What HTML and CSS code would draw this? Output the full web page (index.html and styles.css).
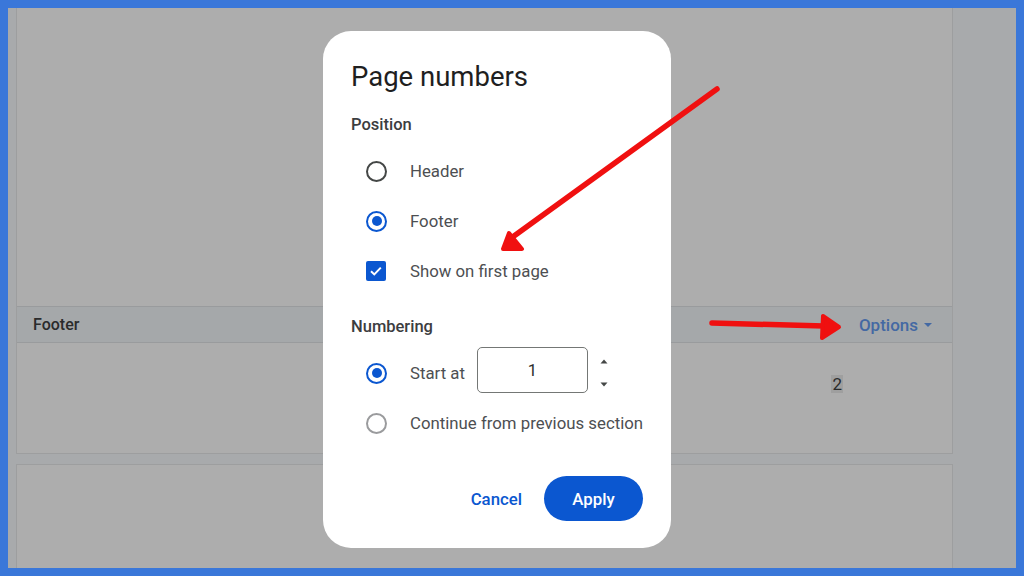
FILE: index.html
```html
<!DOCTYPE html>
<html lang="en">
<head>
  <meta charset="UTF-8">
  <title>Page numbers</title>
  <link rel="stylesheet" href="styles.css">
</head>
<body>

  <div class="frame">

    <!-- dimmed document behind the dialog -->
    <div class="doc">
      <div class="page page-first">
        <div class="page-body"></div>
        <div class="footer-bar">
          <span class="footer-title">Footer</span>
          <span class="options">Options <span class="caret"></span></span>
        </div>
        <div class="footer-area">
          <span class="page-num">2</span>
        </div>
      </div>
      <div class="page page-next"></div>
    </div>

    <!-- dialog -->
    <div class="dialog">
      <h1 class="dialog-title">Page numbers</h1>

      <div class="section-label">Position</div>
      <div class="option">
        <span class="radio"></span>
        <span class="option-label">Header</span>
      </div>
      <div class="option">
        <span class="radio checked"></span>
        <span class="option-label">Footer</span>
      </div>
      <div class="option">
        <span class="checkbox">
          <svg width="20" height="20" viewBox="0 0 20 20"><path d="M5 10.2l3.3 3.2 6.5-6.8" fill="none" stroke="#fff" stroke-width="2"/></svg>
        </span>
        <span class="option-label">Show on first page</span>
      </div>

      <div class="section-label numbering">Numbering</div>
      <div class="option">
        <span class="radio checked"></span>
        <span class="option-label">Start at</span>
        <span class="number-box">1</span>
        <span class="spinner">
          <svg width="10" height="30" viewBox="0 0 10 30">
            <path d="M1.5 5.5h7L5 1.5z" fill="#444746"/>
            <path d="M1.5 24.5h7L5 28.5z" fill="#444746"/>
          </svg>
        </span>
      </div>
      <div class="option">
        <span class="radio disabled"></span>
        <span class="option-label">Continue from previous section</span>
      </div>

      <div class="actions">
        <button class="btn-text">Cancel</button>
        <button class="btn-filled">Apply</button>
      </div>
    </div>

    <!-- red annotation arrows -->
    <svg class="arrows" width="1024" height="576" viewBox="0 0 1024 576">
      <g stroke="#f01010" stroke-linecap="round" stroke-linejoin="round" fill="#f01010">
        <path d="M717 89L514 236" stroke-width="5.5" fill="none"/>
        <path d="M503 249L509 233L522 249z" stroke-width="4"/>
        <path d="M712 323L824 326" stroke-width="5.5" fill="none"/>
        <path d="M839 327L823 316L822 338z" stroke-width="4"/>
      </g>
    </svg>

  </div>

</body>
</html>
```

FILE: styles.css
```css
body {
  margin: 0;
  font-family: Roboto, "Liberation Sans", sans-serif;
}

.frame {
  position: relative;
  width: 1024px;
  height: 576px;
  box-sizing: border-box;
  border: 8px solid #3a77d9;
  background: #a8aaac;
  overflow: hidden;
}

.doc {
  display: flex;
  flex-direction: column;
  gap: 10px;
  padding-left: 8px;
}

.page {
  width: 937px;
  box-sizing: border-box;
  background: #adadad;
  border: 1px solid #9d9e9f;
}

.page-first {
  height: 447px;
  margin-top: -1px;
  display: flex;
  flex-direction: column;
}

.page-body {
  height: 298px;
}

.footer-bar {
  height: 37px;
  box-sizing: border-box;
  background: #a5a8aa;
  border-top: 1px solid #999b9d;
  border-bottom: 1px solid #999b9d;
  display: flex;
  align-items: center;
  justify-content: space-between;
  padding: 0 20px 0 16px;
}

.footer-title {
  font-size: 16px;
  font-weight: 500;
  color: #2a2b2c;
}

.options {
  font-size: 17px;
  font-weight: 500;
  color: #4469a3;
  display: flex;
  align-items: center;
  gap: 6px;
}

.caret {
  width: 0;
  height: 0;
  border-left: 4px solid transparent;
  border-right: 4px solid transparent;
  border-top: 4px solid #4469a3;
}

.footer-area {
  flex: 1;
  display: flex;
  justify-content: flex-end;
  padding: 32px 109px 0 0;
  align-items: flex-start;
}

.page-num {
  font-size: 17px;
  color: #2a2b2c;
  background: #9f9f9f;
  line-height: 18px;
  padding: 0 1px;
}

.page-next {
  height: 120px;
}

/* dialog */

.dialog {
  position: absolute;
  left: 315px;
  top: 23px;
  width: 348px;
  height: 517px;
  box-sizing: border-box;
  background: #fff;
  border-radius: 28px;
  padding: 30px 28px 0 28px;
}

.dialog-title {
  margin: 0;
  font-size: 27.5px;
  font-weight: 400;
  line-height: 32px;
  color: #1f1f1f;
}

.section-label {
  margin: 22px 0 11px;
  font-size: 16.5px;
  font-weight: 500;
  line-height: 20px;
  color: #3c3d3f;
}

.section-label.numbering {
  margin-top: 21px;
}

.option {
  height: 50px;
  display: flex;
  align-items: center;
  padding-left: 15px;
}

.option-label {
  margin-left: 23px;
  font-size: 16.8px;
  color: #4d4f52;
  white-space: nowrap;
}

.radio {
  width: 21px;
  height: 21px;
  flex-shrink: 0;
  box-sizing: border-box;
  border: 2px solid #444746;
  border-radius: 50%;
  position: relative;
}

.radio.checked {
  border-color: #0b57d0;
}

.radio.checked::after {
  content: "";
  position: absolute;
  left: 3.5px;
  top: 3.5px;
  width: 10px;
  height: 10px;
  border-radius: 50%;
  background: #0b57d0;
}

.radio.disabled {
  border-color: #9a9b9d;
}

.checkbox {
  width: 20px;
  height: 20px;
  margin-right: 1px;
  border-radius: 2px;
  background: #0b57d0;
  display: flex;
}

.number-box {
  margin-left: 12px;
  margin-top: -6px;
  width: 111px;
  height: 46px;
  box-sizing: border-box;
  border: 1px solid #747775;
  border-radius: 5px;
  display: flex;
  align-items: center;
  justify-content: center;
  font-size: 16.5px;
  color: #2a2b2c;
}

.spinner {
  margin-left: 11px;
  display: flex;
}

.actions {
  margin-top: 28px;
  display: flex;
  justify-content: flex-end;
  align-items: center;
  gap: 22px;
}

.actions button {
  font-family: Roboto, "Liberation Sans", sans-serif;
  font-size: 16.8px;
  font-weight: 500;
  border: none;
  cursor: pointer;
}

.btn-text {
  background: none;
  color: #0b57d0;
  padding: 0;
}

.btn-filled {
  width: 99px;
  height: 45px;
  border-radius: 23px;
  background: #0b57d0;
  color: #fff;
}

.arrows {
  position: absolute;
  left: -8px;
  top: -8px;
  pointer-events: none;
}
```
